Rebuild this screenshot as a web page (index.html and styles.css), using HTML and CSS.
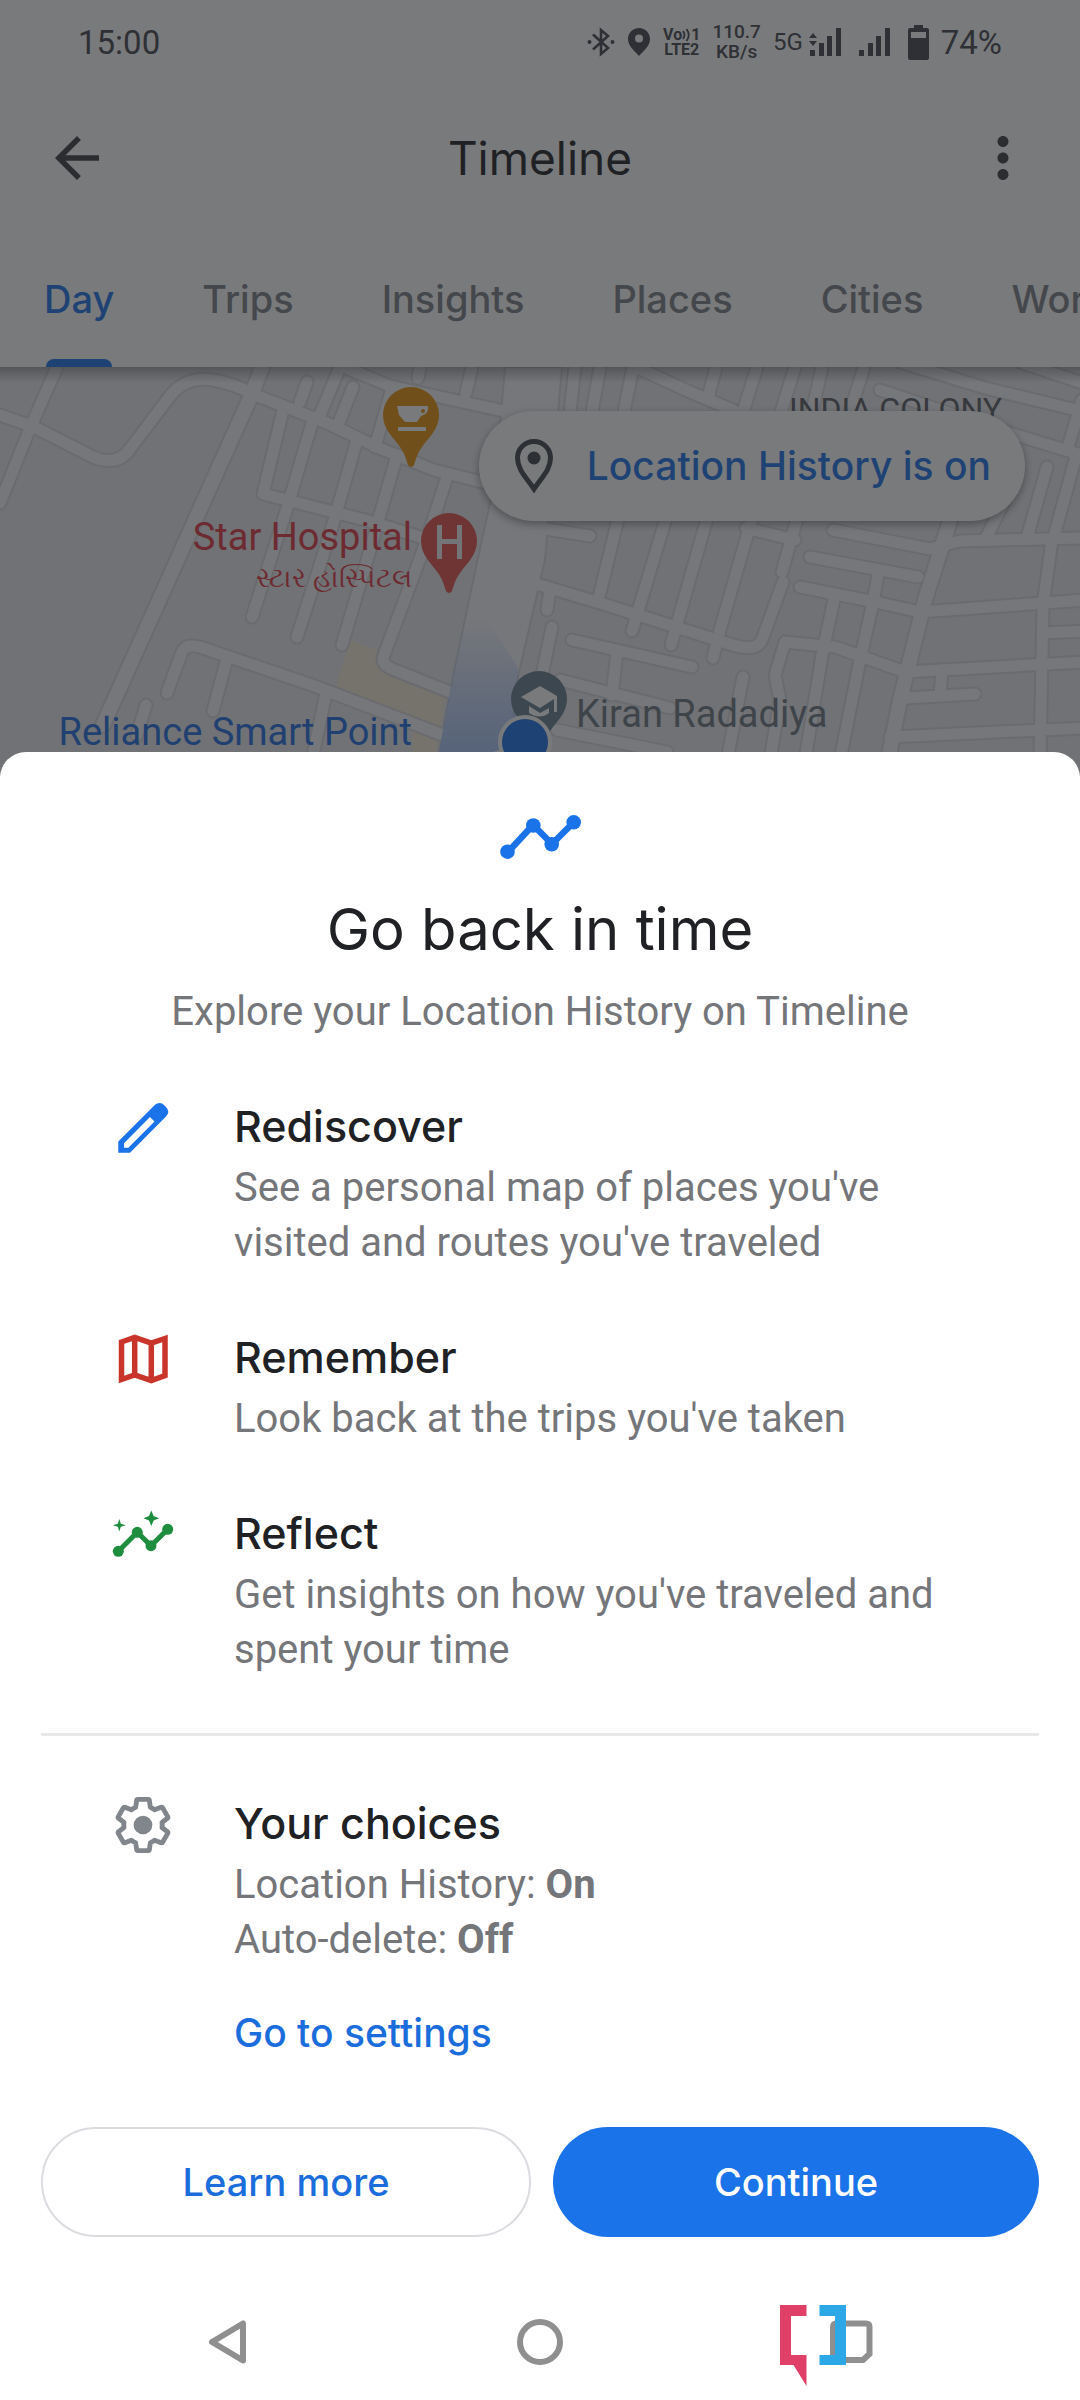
FILE: index.html
```html
<!DOCTYPE html>
<html lang="en">
<head>
  <meta charset="utf-8">
  <meta name="viewport" content="width=device-width, initial-scale=1">
  <title>Timeline</title>
  <link rel="stylesheet" href="styles.css">
</head>
<body>
<div class="screen">
  <div class="app">
    <div class="status">
      <span class="clock">15:00</span>
      <div class="status-icons">
        <svg width="28" height="28" viewBox="0 0 28 28" aria-label="Bluetooth"><path d="M6 6.500L21 20L14 26V2l7 6L6 21.500" fill="none" stroke="currentColor" stroke-width="2.600"/><circle cx="2.500" cy="14" r="2" fill="currentColor"/><circle cx="25.500" cy="14" r="2" fill="currentColor"/></svg>
        <svg width="24" height="28" viewBox="0 0 24 28" aria-label="Location"><path fill-rule="evenodd" d="M12 0C5.500 0 1 5 1 11c0 7 6.500 12 11 17 4.500-5 11-10 11-17C23 5 18.500 0 12 0zm0 6.500a4 4 0 1 1 0 8 4 4 0 0 1 0-8z" fill="currentColor"/></svg>
        <span class="volte"><span class="volte-top">Vo<svg width="9" height="14" viewBox="0 0 9 14"><path d="M1 3q3 4 0 8M4.500 1q4.500 6 0 12" fill="none" stroke="currentColor" stroke-width="1.800"/></svg>1</span><span>LTE2</span></span>
        <span class="speed"><span>110.7</span><span>KB/s</span></span>
        <span class="net">5G</span>
        <svg width="37" height="28" viewBox="0 0 37 28" aria-label="Signal"><path d="M0 22h5v6H0zM9 15h5v13H9zM17 8h5v20h-5zM26 0h5v28h-5zM3 5l4 5H-1zM3 18l-4-5h8z" fill="currentColor"/></svg>
        <svg width="37" height="28" viewBox="0 0 37 28" aria-label="Signal"><path d="M0 22h5v6H0zM9 15h5v13H9zM17 8h5v20h-5zM26 0h5v28h-5z" fill="currentColor"/></svg>
        <svg width="21" height="35" viewBox="0 0 21 35" aria-label="Battery"><path fill-rule="evenodd" d="M6 0h9v3h4q2 0 2 2v28q0 2-2 2H2q-2 0-2-2V5q0-2 2-2h4zM3 7v6h15V7z" fill="currentColor"/></svg>
        <span class="clock">74%</span>
      </div>
    </div>

    <header class="bar">
      <button class="icon-btn" aria-label="Back"><svg width="66" height="66" viewBox="0 0 24 24"><path d="M20 11H7.830l5.590-5.590L12 4l-8 8 8 8 1.410-1.410L7.830 13H20v-2z" fill="currentColor"/></svg></button>
      <h1>Timeline</h1>
      <button class="icon-btn" aria-label="More options"><svg width="66" height="66" viewBox="0 0 24 24"><path d="M12 8c1.100 0 2-.9 2-2s-.9-2-2-2-2 .9-2 2 .9 2 2 2zm0 2c-1.100 0-2 .9-2 2s.9 2 2 2 2-.9 2-2-.9-2-2-2zm0 6c-1.100 0-2 .9-2 2s.9 2 2 2 2-.9 2-2-.9-2-2-2z" fill="currentColor"/></svg></button>
    </header>

    <nav class="tabs">
      <a href="#day" class="tab active">Day</a>
      <a href="#trips" class="tab">Trips</a>
      <a href="#insights" class="tab">Insights</a>
      <a href="#places" class="tab">Places</a>
      <a href="#cities" class="tab">Cities</a>
      <a href="#world" class="tab">World</a>
    </nav>

    <div class="map">
      <svg class="map-art" viewBox="0 367 1080 409" preserveAspectRatio="xMidYMin slice">
        <defs>
          <g id="streets">
            <path d="M0 415L34 427L95 458Q118 466 130 449L170 396Q186 376 213 380Q235 384 255 395L327 423L379 448L434 470L490 484"/>
            <path d="M57 367L28 433L0 503"/>
            <path d="M307 382L300 402M340 367L318 420M353 387L338 425M344 367L390 386L517 414L560 420M392 388L375 447"/>
            <path d="M283 410L263 494L365 520L430 540M312 423L288 505L252 617M357 440L333 524L297 637M397 455L370 550L342 645"/>
            <path d="M447 477L425 545L384 655Q380 664 392 669L450 692"/>
            <path d="M167 693L182 652Q186 643 200 647L312 685L440 734M226 662L213 711M146 705L137 735M325 698L312 760M420 367L418 378M472 367L466 393"/>
            <path d="M575 367L570 412M600 367L592 412M633 367L624 412M636 367L690 392L733 410M716 367L709 394M757 367L743 412M795 367L781 412M822 367L812 412M864 367L850 412"/>
            <path d="M900 362L985 388L1085 412M1020 362L1085 384M880 390L1000 430L1085 456M1082 400L1068 447"/>
            <path d="M540 528L590 536M619 515L599 597M667 515L632 631M708 515L671 645M753 515L720 630L713 658M798 515L782 572M746 528L795 540"/>
            <path d="M540 585L600 603L733 645Q756 652 762 640L783 582M550 590L547 610"/>
            <path d="M833 530L930 549L960 541L1085 538M810 557L918 577M800 587L880 603L920 612L1085 600"/>
            <path d="M878 575L872 607L860 660L840 760M835 595L822 655L805 760M785 642L835 647L905 672L1085 662M785 642L775 675L780 700L770 760"/>
            <path d="M1052 540L1043 605L1040 760M1085 631L1043 633M942 670L940 695M905 698L975 694M890 737L1085 728M1005 500L985 540M1047 467L1027 538M1075 460L1053 540"/>
            <path d="M572 640L692 667M617 652L612 695M560 680L670 708M743 677L727 760M557 730L667 752M552 627L541 680"/>
          </g>
          <g id="avenues">
            <path d="M265 360L250 398L103 725M955 505L925 600L900 700L888 760"/>
          </g>
          <linearGradient id="beam" x1="0" y1="1" x2="0" y2="0">
            <stop offset="0" stop-color="#9fc0fa"/>
            <stop offset="1" stop-color="#9fc0fa" stop-opacity="0"/>
          </linearGradient>
        </defs>
        <path d="M350 640L378 650L384 670L446 693L432 776H412V725L335 690Z" fill="#f8eed6"/>
        <g fill="none" stroke-linecap="round" stroke-linejoin="round" stroke="#d7d9dc">
          <use href="#streets" stroke-width="15"/><use href="#avenues" stroke-width="18"/>
        </g>
        <path d="M505 367H562L545 560L515 690L510 776H434L450 690L476 567L495 480Z" fill="#f6f7f9" stroke="#d7d9dc" stroke-width="2"/>
        <g fill="none" stroke-linecap="round" stroke-linejoin="round" stroke="#f6f7f9">
          <use href="#streets" stroke-width="11"/><use href="#avenues" stroke-width="14"/>
        </g>
        <path d="M524 742L436 770L450 690L464 620H488L518 668Z" fill="url(#beam)"/>

        <path d="M411 387a28 28 0 0 1 28 28c0 14-10 22-17 32-5 7-6 12-8 18q-3 4-6 0c-2-6-3-11-8-18-7-10-17-18-17-32a28 28 0 0 1 28-28z" fill="#ea950a"/>
        <path d="M397 406h31v3q0 5-7 7l-4 6h-12l-6-7zM398 427h28v4h-28z" fill="#fff"/>
        <circle cx="423" cy="411" r="2" fill="#ea950a"/>

        <path d="M449 513a28 28 0 0 1 28 28c0 14-10 22-17 32-5 7-6 12-8 18q-3 4-6 0c-2-6-3-11-8-18-7-10-17-18-17-32a28 28 0 0 1 28-28z" fill="#e5544b"/>
        <path d="M437 525h5v14h15v-14h5v34h-5v-15h-15v15h-5z" fill="#f1f3f4"/>

        <path d="M539 671a28 28 0 0 1 28 28c0 14-10 22-17 32-5 7-6 12-8 18q-3 4-6 0c-2-6-3-11-8-18-7-10-17-18-17-32a28 28 0 0 1 28-28z" fill="#6a8190"/>
        <path d="M521 697l19-11 17 10v16h-3v-13l-14 9z" fill="#fff"/><path d="M529 706l11 7 9-5v5q-9 7-20 0z" fill="#fff"/>
        <circle cx="525" cy="742" r="25" fill="#1a73e8" stroke="#fff" stroke-width="4"/>

        <g class="map-labels">
          <text x="412" y="550" text-anchor="end" fill="#e03a44">Star Hospital</text>
          <text x="412" y="587" text-anchor="end" fill="#e03a44" class="label-small">સ્ટાર હોસ્પિટલ</text>
          <text x="412" y="745" text-anchor="end" fill="#1f6fe0">Reliance Smart Point</text>
          <text x="576" y="727" fill="#6c7880">Kiran Radadiya</text>
          <text x="789" y="420" fill="#5a5e64" class="label-area">INDIA COLONY</text>
        </g>
      </svg>
      <button class="pill">
        <svg width="38" height="54" viewBox="0 0 38 54"><path d="M19 2.500C9.500 2.500 2.500 10 2.500 19 2.500 31 12 39 19 50 26 39 35.500 31 35.500 19 35.500 10 28.500 2.500 19 2.500z" fill="none" stroke="#42464b" stroke-width="5"/><circle cx="19" cy="19" r="6.500" fill="#42464b"/></svg>
        <span>Location History is on</span>
      </button>
    </div>
    <div class="scrim"></div>
  </div>

  <main class="sheet">
    <svg class="hero" width="81" height="44" viewBox="0 0 81 44"><path d="M8 37L33 10L52 29L74 7" fill="none" stroke="#1a73e8" stroke-width="6.500"/><g fill="#1a73e8"><circle cx="7.500" cy="36.700" r="7.300"/><circle cx="33.300" cy="10.500" r="7.300"/><circle cx="51.700" cy="29.300" r="7.300"/><circle cx="73.700" cy="7.300" r="7.300"/></g></svg>
    <h2>Go back in time</h2>
    <p class="lead">Explore your Location History on Timeline</p>

    <section class="item">
      <svg width="66" height="66" viewBox="0 0 66 66"><path fill-rule="evenodd" d="M8.300 46.500L45 9.800Q50 6 54.500 10.500L56 12Q60.500 16.500 56 21.500L20 57.700H8.300zM14 48.300V52.700H18.300L44.500 26.500L40 22z" fill="#1a73e8"/></svg>
      <div>
        <h3>Rediscover</h3>
        <p>See a personal map of places you've<br>visited and routes you've traveled</p>
      </div>
    </section>
    <section class="item">
      <svg width="66" height="66" viewBox="0 0 66 66"><path d="M11.500 16L24.700 11.500L41.300 17L55 12.500V49.500L41.300 54.500L24.700 49L11.500 53.500zM24.700 11.500V49M41.300 17V54.500" fill="none" stroke="#c9352b" stroke-width="5.500"/></svg>
      <div>
        <h3>Remember</h3>
        <p>Look back at the trips you've taken</p>
      </div>
    </section>
    <section class="item">
      <svg width="66" height="66" viewBox="0 0 66 66"><path d="M8.300 49.300L27.300 30.300L41 43.700L57.700 27.300" fill="none" stroke="#1e8e3e" stroke-width="5"/><g fill="#1e8e3e"><circle cx="8.300" cy="49.300" r="5.500"/><circle cx="27.300" cy="30.300" r="5.500"/><circle cx="41" cy="43.700" r="5.500"/><circle cx="57.700" cy="27.300" r="5.500"/><path d="M9.300 17l1.500 4.800 5 1.500-5 1.500-1.500 4.700-1.500-4.700-5-1.500 5-1.500zM41.300 8.500l2.300 5.500 5.500 2.300-5.500 2.300-2.300 5.500-2.300-5.500-5.500-2.300 5.500-2.300z"/></g></svg>
      <div>
        <h3>Reflect</h3>
        <p>Get insights on how you've traveled and<br>spent your time</p>
      </div>
    </section>

    <hr>

    <section class="item">
      <svg width="66" height="66" viewBox="0 0 24 24"><path transform="translate(.84 .84) scale(.93)" d="M19.430 12.980c.04-.32.07-.64.07-.98 0-.34-.03-.66-.07-.98l2.110-1.650c.19-.15.24-.42.12-.64l-2-3.460c-.09-.16-.26-.25-.44-.25-.06 0-.12.01-.17.03l-2.490 1c-.52-.4-1.080-.73-1.690-.98l-.38-2.650C14.460 2.180 14.250 2 14 2h-4c-.25 0-.46.18-.49.42l-.38 2.650c-.61.25-1.170.59-1.690.98l-2.490-1c-.06-.02-.12-.03-.18-.03-.17 0-.34.09-.43.25l-2 3.460c-.13.22-.07.49.12.64l2.110 1.650c-.04.32-.07.65-.07.98 0 .33.03.66.07.98l-2.110 1.650c-.19.15-.24.42-.12.64l2 3.460c.09.16.26.25.44.25.06 0 .12-.01.17-.03l2.490-1c.52.4 1.080.73 1.690.98l.38 2.650c.03.24.24.42.49.42h4c.25 0 .46-.18.49-.42l.38-2.650c.61-.25 1.170-.59 1.690-.98l2.490 1c.06.02.12.03.18.03.17 0 .34-.09.43-.25l2-3.460c.12-.22.07-.49-.12-.64z" fill="none" stroke="#80868b" stroke-width="1.900" stroke-linejoin="round"/><circle cx="12" cy="12" r="3.400" fill="#80868b"/></svg>
      <div>
        <h3>Your choices</h3>
        <p>Location History: <b>On</b><br>Auto-delete: <b>Off</b></p>
        <a class="settings" href="#settings">Go to settings</a>
      </div>
    </section>

    <div class="actions">
      <button class="btn outline">Learn more</button>
      <button class="btn filled">Continue</button>
    </div>
  </main>

  <nav class="sysnav">
    <button aria-label="Back"><svg width="40" height="46" viewBox="0 0 40 46"><path d="M35 4.500V41.500L4 23z" fill="none" stroke="#8f8f8f" stroke-width="6" stroke-linejoin="round"/></svg></button>
    <button aria-label="Home"><svg width="46" height="46" viewBox="0 0 46 46"><circle cx="23" cy="23" r="20" fill="none" stroke="#8f8f8f" stroke-width="6"/></svg></button>
    <button aria-label="Recent apps"><svg width="46" height="46" viewBox="0 0 46 46"><path d="M7 4.500H37Q40.500 4.500 40.500 8V35L34 41H4V8Q4 4.500 7 4.500z" fill="none" stroke="#8f8f8f" stroke-width="6"/></svg></button>
    <svg class="badge" width="66" height="82" viewBox="0 0 66 82"><path d="M0 0H26.500V11H11V50H26.500V81L13.500 60H0z" fill="#e04068"/><path d="M39.500 0H66V60H39.500V50H55V11H39.500z" fill="#2da8e6"/></svg>
  </nav>
</div>
</body>
</html>
```
FILE: styles.css
```css
* { box-sizing: border-box; margin: 0; }

body {
  background: #fff;
  font-family: Roboto, "Noto Sans", sans-serif;
  color: #202124;
}

button {
  border: 0;
  padding: 0;
  background: none;
  color: inherit;
  font: inherit;
}

svg { display: block; flex: none; }
a { text-decoration: none; }

.screen {
  display: flex;
  flex-direction: column;
  min-height: 100vh;
  overflow: hidden;
}

/* App behind the sheet */
.app {
  position: relative;
  background: #fff;
}

.scrim {
  position: absolute;
  inset: 0;
  background: rgba(32, 33, 36, 0.6);
}

.status {
  display: flex;
  justify-content: space-between;
  align-items: center;
  height: 84px;
  padding: 0 78px;
  color: #44484e;
}

.clock { font-size: 33px; }

.status-icons {
  display: flex;
  align-items: center;
  gap: 12px;
}

.status-icons svg { overflow: visible; }

.volte,
.speed {
  display: flex;
  flex-direction: column;
  align-items: center;
}

.volte {
  font-size: 16px;
  font-weight: 700;
  line-height: 15px;
}

.volte-top {
  display: flex;
  align-items: center;
}

.speed {
  font-size: 19px;
  font-weight: 500;
  line-height: 20px;
}

.net {
  margin-right: -5px;
  font-size: 24px;
}

.bar {
  display: flex;
  align-items: center;
  justify-content: space-between;
  height: 148px;
  padding: 0 44px;
}

.bar h1 {
  font: 400 46px/60px Inter, sans-serif;
}

.icon-btn { color: #3c4043; }

.tabs {
  display: flex;
  gap: 88px;
  height: 135px;
  padding-left: 44px;
  overflow: hidden;
}

.tab {
  position: relative;
  flex: none;
  font: 500 38px/135px Inter, sans-serif;
  color: #7c8085;
}

.tab.active { color: #1a73e8; }

.tab.active::after {
  content: "";
  position: absolute;
  left: 2px;
  right: 2px;
  bottom: 0;
  height: 8px;
  border-radius: 8px 8px 0 0;
  background: #1a73e8;
}

.map {
  position: relative;
  height: 409px;
  overflow: hidden;
  background: #eaecee;
}

.map-art {
  width: 100%;
  height: 100%;
}

/* Shadow cast by the tab bar */
.map::after {
  content: "";
  position: absolute;
  inset: 0 0 auto;
  height: 16px;
  background: linear-gradient(rgba(0, 0, 0, 0.3), rgba(0, 0, 0, 0));
}

.map-labels { font-size: 38px; }
.label-small { font-size: 27px; }
.label-area { font-size: 32px; }

.pill {
  position: absolute;
  top: 44px;
  right: 55px;
  display: flex;
  align-items: center;
  gap: 34px;
  height: 110px;
  padding: 0 34px 0 36px;
  border-radius: 55px;
  background: #fff;
  box-shadow: 0 3px 8px rgba(0, 0, 0, 0.4);
  font: 500 39px/48px Inter, sans-serif;
  color: #1a73e8;
}

/* Bottom sheet */
.sheet {
  position: relative;
  display: flex;
  flex-direction: column;
  margin-top: -24px;
  padding: 63px 41px 47px;
  border-radius: 26px 26px 0 0;
  background: #fff;
}

.hero { align-self: center; }

.sheet h2 {
  margin-top: 32px;
  font: 400 58px/76px Inter, sans-serif;
  text-align: center;
}

.sheet p {
  font-size: 40px;
  line-height: 55px;
  color: #747679;
}

.sheet .lead {
  margin-top: 17px;
  text-align: center;
}

.item {
  display: flex;
  gap: 58px;
  margin-top: 59px;
  padding-left: 69px;
}

.item > svg { margin-top: -3px; }

.item h3 {
  margin-bottom: 6px;
  font: 500 43px/56px Inter, sans-serif;
}

.item b { font-weight: 700; }

.sheet hr {
  height: 3px;
  margin-top: 56px;
  border: 0;
  background: #e8e8e9;
}

.settings {
  display: inline-block;
  margin-top: 38px;
  font: 500 39px/56px Inter, sans-serif;
  color: #1a6ddb;
}

.actions {
  display: flex;
  gap: 22px;
  margin-top: 66px;
}

.btn {
  flex: 1;
  height: 110px;
  border-radius: 55px;
  font: 500 38px/48px Inter, sans-serif;
}

.outline {
  border: 2px solid #dadce0;
  color: #1a6ddb;
}

.filled {
  background: #1a73e8;
  color: #fff;
}

/* System navigation */
.sysnav {
  position: relative;
  display: flex;
  padding: 0 72px;
}

.sysnav button {
  flex: 1;
  display: flex;
  align-items: center;
  justify-content: center;
  height: 116px;
}

.badge {
  position: absolute;
  top: 21px;
  right: 234px;
}
```
